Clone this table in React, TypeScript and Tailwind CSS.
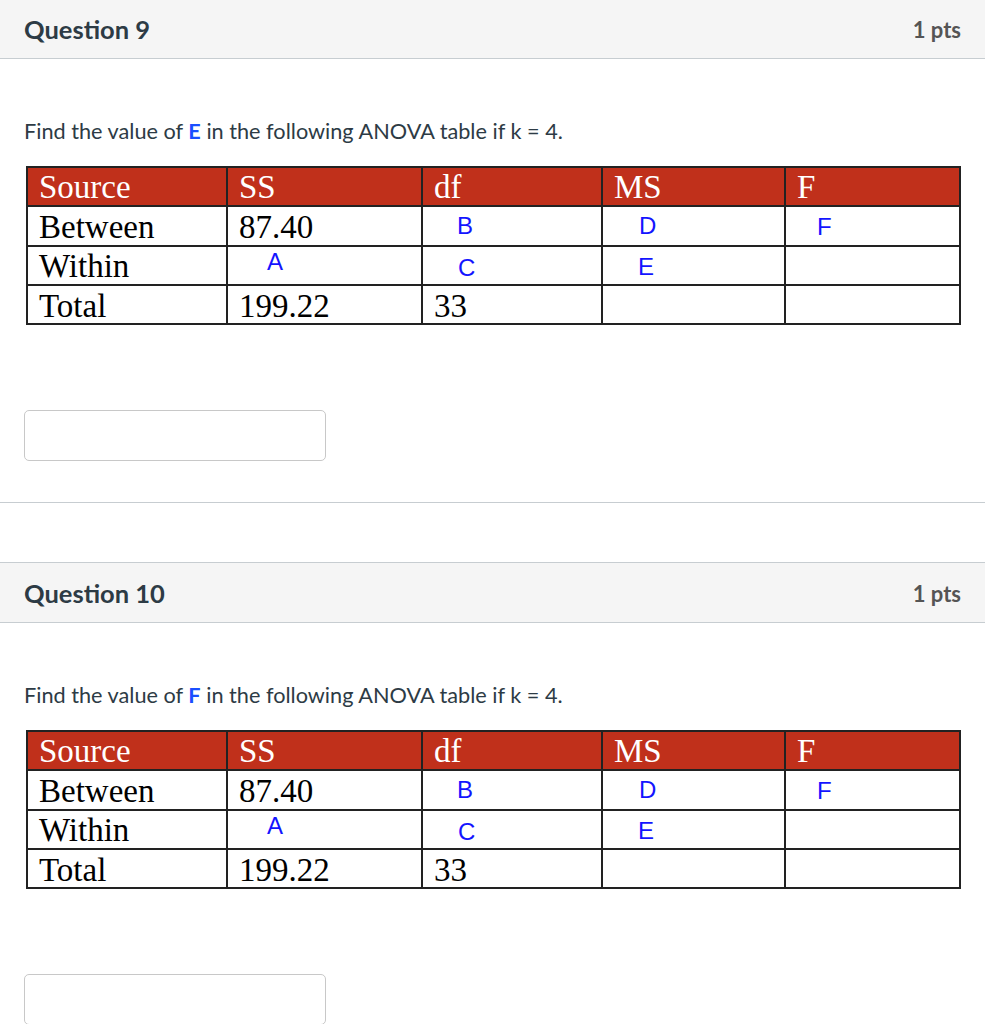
import React from 'react'

function AnovaTable() {
  const cell = 'border-2 border-[#222] p-0 align-middle'
  const serif = "font-['Liberation_Serif',serif] text-[33px] leading-none"
  const blue = "font-['Liberation_Sans',sans-serif] text-[24px] leading-none text-[#1414ff]"
  return (
    <table className="ml-[2px] border-collapse border-2 border-[#222] table-fixed w-[933px]">
      <colgroup>
        <col className="w-[200px]" />
        <col className="w-[195px]" />
        <col className="w-[180px]" />
        <col className="w-[183px]" />
        <col className="w-[175px]" />
      </colgroup>
      <thead>
        <tr className="h-[39px] bg-[#c0301b] text-white">
          {['Source', 'SS', 'df', 'MS', 'F'].map((h) => (
            <th key={h} className={`${cell} ${serif} text-left font-normal pl-[11px] pt-[2px]`}>
              {h}
            </th>
          ))}
        </tr>
      </thead>
      <tbody className="text-black">
        <tr className="h-[40px]">
          <td className={`${cell} ${serif} pl-[11px] pt-[3px]`}>Between</td>
          <td className={`${cell} ${serif} pl-[11px] pt-[3px]`}>87.40</td>
          <td className={`${cell} ${blue} pl-[34px]`}>B</td>
          <td className={`${cell} ${blue} pl-[36px]`}>D</td>
          <td className={`${cell} ${blue} pl-[31px] pt-[2px]`}>F</td>
        </tr>
        <tr className="h-[39px]">
          <td className={`${cell} ${serif} pl-[11px] pt-[1px]`}>Within</td>
          <td className={`${cell} ${blue} pl-[39px] pb-[7px]`}>A</td>
          <td className={`${cell} ${blue} pl-[35px] pt-[4px]`}>C</td>
          <td className={`${cell} ${blue} pl-[35px] pt-[3px]`}>E</td>
          <td className={cell}></td>
        </tr>
        <tr className="h-[39px]">
          <td className={`${cell} ${serif} pl-[11px] pt-[3px]`}>Total</td>
          <td className={`${cell} ${serif} pl-[11px] pt-[3px]`}>199.22</td>
          <td className={`${cell} ${serif} pl-[11px] pt-[3px]`}>33</td>
          <td className={cell}></td>
          <td className={cell}></td>
        </tr>
      </tbody>
    </table>
  )
}

function Question({ num, letter }: { num: number; letter: string }) {
  return (
    <div className="border-y border-[#c7cdd1]">
      <div className="h-[60px] bg-[#f5f5f5] border-b border-[#c7cdd1] flex items-center justify-between px-6">
        <h2 className="text-[25.5px] font-bold text-[#2d3b45] pt-[1px]">Question {num}</h2>
        <span className="text-[22px] font-bold text-[#555] pt-[2px]">1 pts</span>
      </div>
      <div className="px-6 pt-[58px] pb-[41px]">
        <p className="text-[21.7px] text-[#2d3b45] leading-[28px]">
          Find the value of <span className="font-bold text-[#1a4fff]">{letter}</span> in the following ANOVA
          table if k = 4.
        </p>
        <div className="mt-[21px]">
          <AnovaTable />
        </div>
        <input
          type="text"
          className="mt-[85px] block w-[302px] h-[51px] border border-[#c8c8c8] rounded-[5px] bg-white"
        />
      </div>
    </div>
  )
}

export default function App() {
  return (
    <div className="min-h-screen bg-white font-['Lato',sans-serif] -mt-[2px]">
      <Question num={9} letter="E" />
      <div className="mt-[59px]">
        <Question num={10} letter="F" />
      </div>
    </div>
  )
}
